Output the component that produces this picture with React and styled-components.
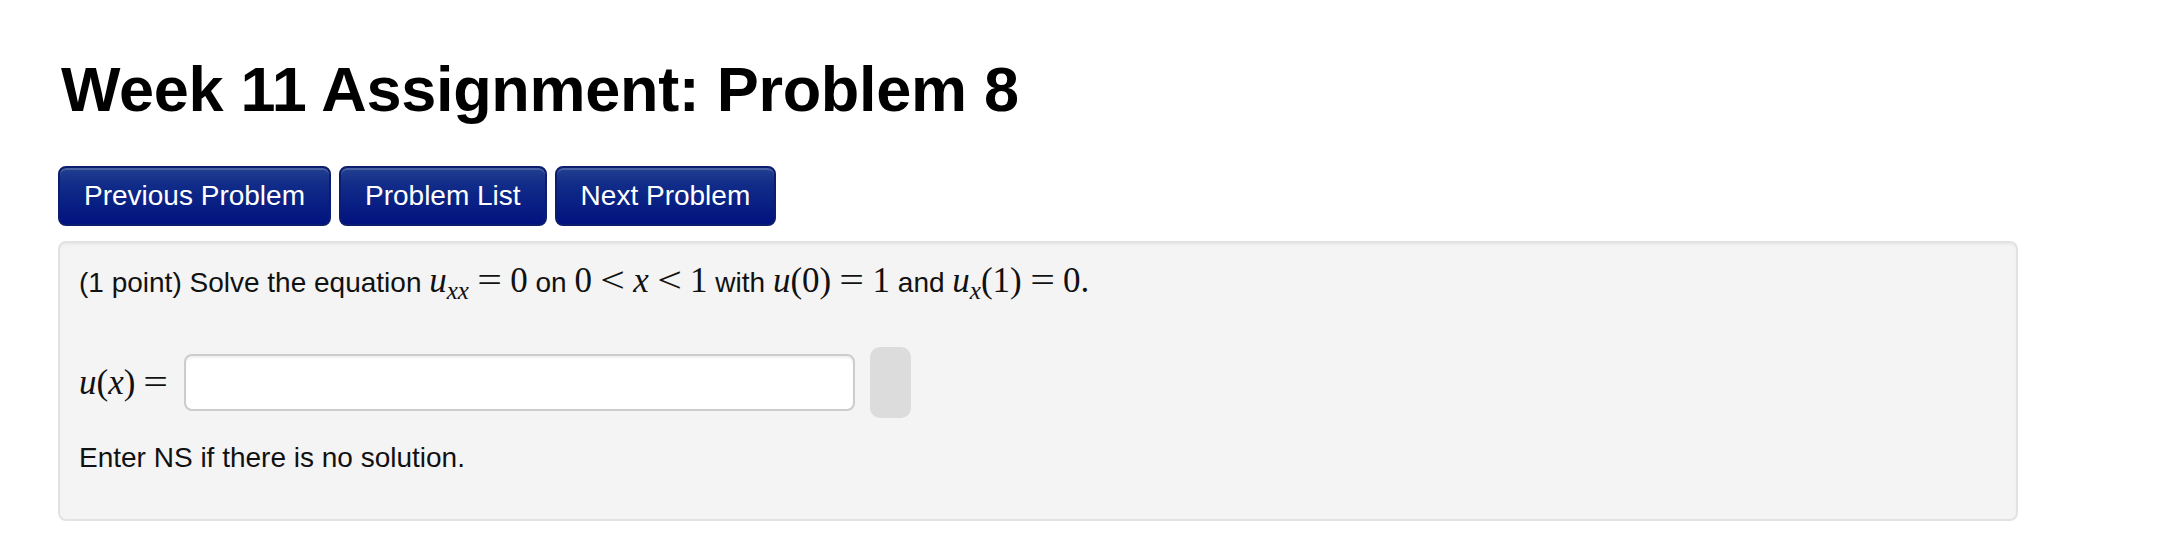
import React from "react";
import styled, { createGlobalStyle } from "styled-components";

const GlobalStyle = createGlobalStyle`
  html, body {
    margin: 0;
    padding: 0;
    background: #ffffff;
  }
  body {
    font-family: "Liberation Sans", Arial, Helvetica, sans-serif;
    color: #111;
  }
`;

const Page = styled.div`
  padding: 49px 144px 0 58px;
`;

const Title = styled.h1`
  margin: 0 0 0 3px;
  font-size: 63px;
  line-height: 80px;
  font-weight: 700;
  color: #000;
  letter-spacing: -0.3px;
`;

const Nav = styled.div`
  display: flex;
  gap: 8px;
  margin-top: 37px;
`;

const NavButton = styled.button`
  height: 60px;
  padding: 0 24px;
  font-family: "Liberation Sans", Arial, sans-serif;
  font-size: 28px;
  color: #fff;
  border: 2px solid #0b1d6c;
  border-radius: 8px;
  background: linear-gradient(#233f90 0%, #102c88 30%, #01127f 100%);
  box-shadow: inset 0 2px 0 rgba(255, 255, 255, 0.18);
  cursor: pointer;
`;

const Well = styled.div`
  margin-top: 15px;
  background: #f4f4f4;
  border: 2px solid #e2e2e2;
  border-radius: 8px;
  box-shadow: inset 0 2px 2px rgba(0, 0, 0, 0.04);
  padding: 18px 19px 32px;
  height: 280px;
  box-sizing: border-box;
  font-size: 28px;
`;

const Line = styled.div`
  line-height: 40px;
  white-space: nowrap;
`;

const M = styled.span`
  font-family: "Liberation Serif", "Times New Roman", serif;
  font-size: 35px;
  font-style: ${(p) => (p.$italic ? "italic" : "normal")};
`;

const Rel = styled.span`
  display: inline-block;
  width: 0.78em;
  margin: 0 0.2em;
  text-align: center;
  font-family: "Liberation Serif", "Times New Roman", serif;
  font-size: 35px;
  transform: scaleX(1.25);
`;

const Sub = styled.sub`
  font-family: "Liberation Serif", "Times New Roman", serif;
  font-style: italic;
  font-size: 25px;
  vertical-align: -7px;
  line-height: 0;
`;

const AnswerRow = styled.div`
  display: flex;
  align-items: center;
  margin-top: 44px;
`;

const Label = styled.span`
  font-family: "Liberation Serif", "Times New Roman", serif;
  font-size: 35px;
  margin-right: 7px;
  white-space: nowrap;
`;

const Input = styled.input`
  width: 671px;
  height: 57px;
  box-sizing: border-box;
  border: 2px solid #cccccc;
  border-radius: 8px;
  background: #fff;
  box-shadow: inset 0 2px 2px rgba(0, 0, 0, 0.06);
  outline: none;
`;

const Preview = styled.div`
  width: 41px;
  height: 71px;
  margin-left: 15px;
  border-radius: 10px;
  background: #dcdcdc;
`;

const Hint = styled.div`
  margin-top: 20px;
  line-height: 40px;
`;

export default function App() {
  return (
    <>
      <GlobalStyle />
      <Page>
        <Title>Week 11 Assignment: Problem 8</Title>
        <Nav>
          <NavButton>Previous Problem</NavButton>
          <NavButton>Problem List</NavButton>
          <NavButton>Next Problem</NavButton>
        </Nav>
        <Well>
          <Line>
            (1 point) Solve the equation <M $italic>u</M>
            <Sub>xx</Sub>
            <Rel>=</Rel>
            <M>0</M> on <M>0</M>
            <Rel>&lt;</Rel>
            <M $italic>x</M>
            <Rel>&lt;</Rel>
            <M>1</M> with <M $italic>u</M>
            <M>(0)</M>
            <Rel>=</Rel>
            <M>1</M> and <M $italic>u</M>
            <Sub>x</Sub>
            <M>(1)</M>
            <Rel>=</Rel>
            <M>0.</M>
          </Line>
          <AnswerRow>
            <Label>
              <i>u</i>(<i>x</i>)<Rel>=</Rel>
            </Label>
            <Input type="text" aria-label="answer" />
            <Preview />
          </AnswerRow>
          <Hint>Enter NS if there is no solution.</Hint>
        </Well>
      </Page>
    </>
  );
}
